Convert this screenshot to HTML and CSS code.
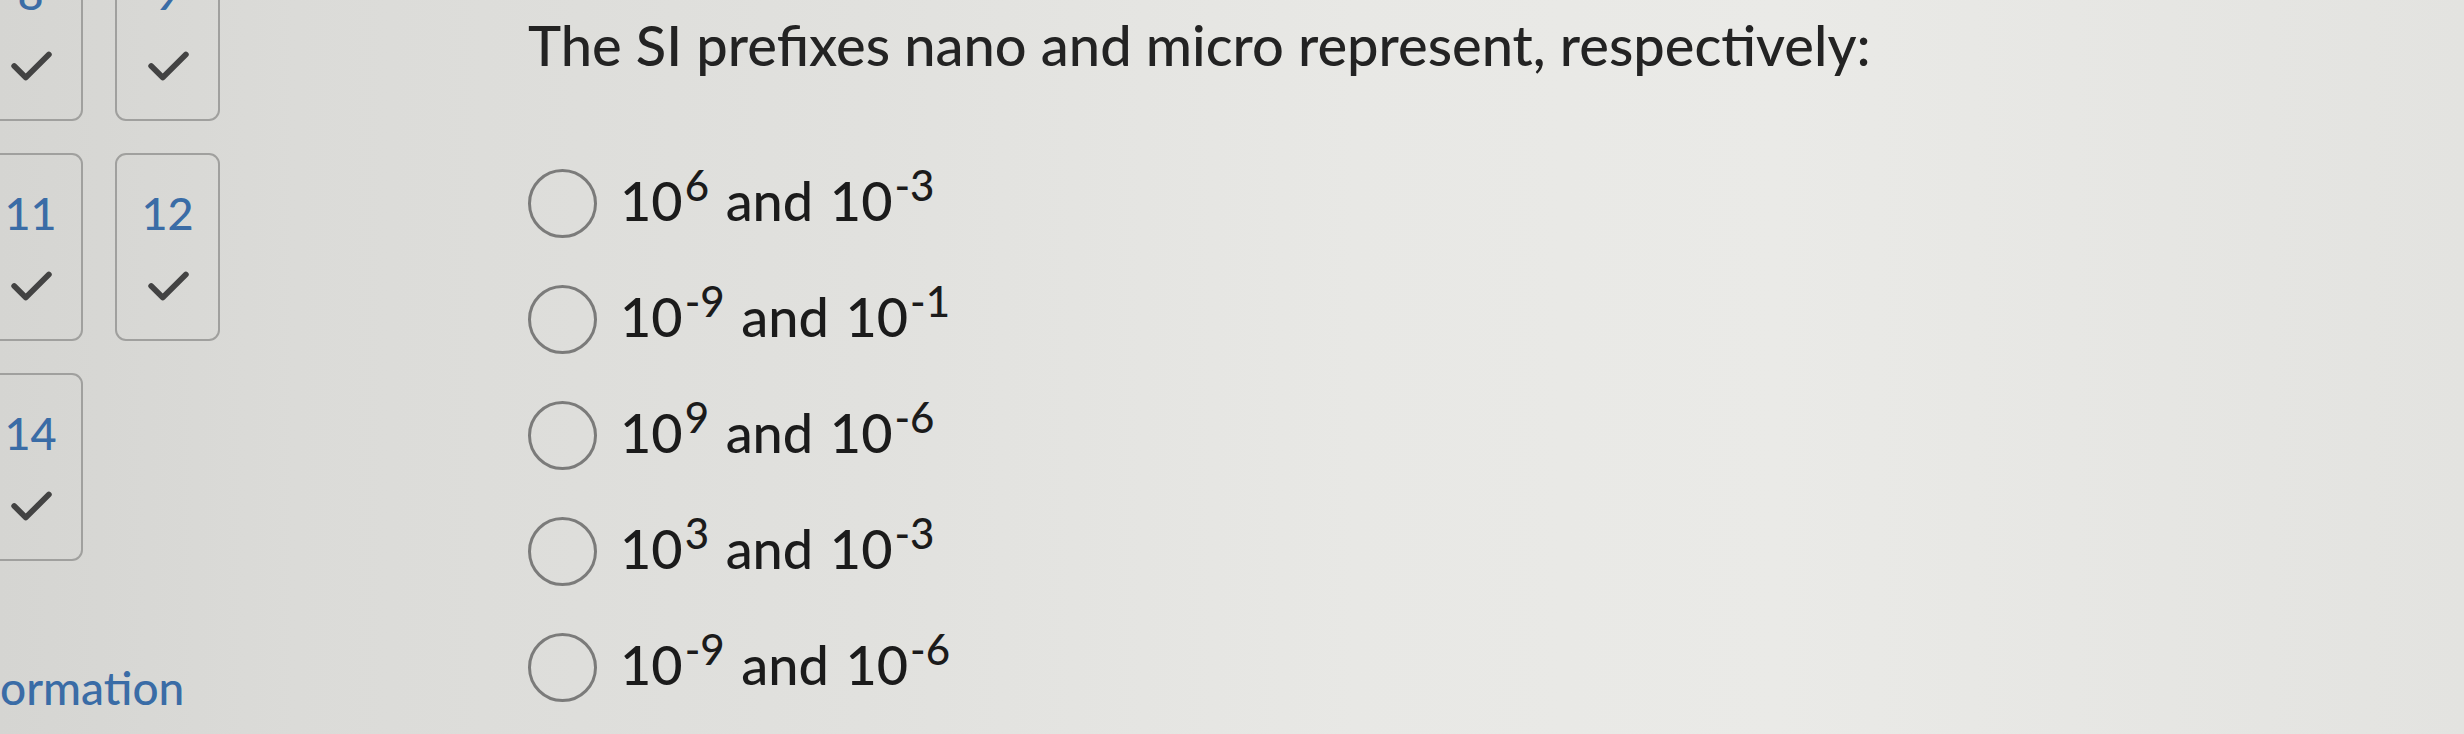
FILE: index.html
```html
<!DOCTYPE html>
<html lang="en">
<head>
<meta charset="utf-8">
<title>Quiz question</title>
<link rel="stylesheet" href="styles.css">
</head>
<body>
<div class="page">
  <aside class="sidebar">
    <div class="grid">
      <div class="card"><span class="num">8</span><svg class="check" viewBox="0 0 40 32"><polyline points="4,16 15,27 37,5"/></svg></div>
      <div class="card"><span class="num">9</span><svg class="check" viewBox="0 0 40 32"><polyline points="4,16 15,27 37,5"/></svg></div>
      <div class="card"><span class="num">11</span><svg class="check" viewBox="0 0 40 32"><polyline points="4,16 15,27 37,5"/></svg></div>
      <div class="card"><span class="num">12</span><svg class="check" viewBox="0 0 40 32"><polyline points="4,16 15,27 37,5"/></svg></div>
      <div class="card"><span class="num">14</span><svg class="check" viewBox="0 0 40 32"><polyline points="4,16 15,27 37,5"/></svg></div>
    </div>
    <div class="info">ormation</div>
  </aside>
  <main class="question">
    <h1 class="prompt">The SI prefixes nano and micro represent, respectively:</h1>
    <ul class="options">
      <li class="option"><span class="radio"></span><span class="label">10<sup>6</sup> and 10<sup>-3</sup></span></li>
      <li class="option"><span class="radio"></span><span class="label">10<sup>-9</sup> and 10<sup>-1</sup></span></li>
      <li class="option"><span class="radio"></span><span class="label">10<sup>9</sup> and 10<sup>-6</sup></span></li>
      <li class="option"><span class="radio"></span><span class="label">10<sup>3</sup> and 10<sup>-3</sup></span></li>
      <li class="option"><span class="radio"></span><span class="label">10<sup>-9</sup> and 10<sup>-6</sup></span></li>
    </ul>
  </main>
</div>
</body>
</html>
```

FILE: styles.css
```css
html, body {
  margin: 0;
  padding: 0;
}
body {
  width: 2464px;
  height: 734px;
  overflow: hidden;
  font-family: Lato, "Open Sans", "Liberation Sans", sans-serif;
  background: linear-gradient(90deg, #d5d5d2 0%, #dbdbd8 12%, #e1e1de 35%, #e8e8e5 55%, #eaeae7 72%, #e3e3e0 100%);
}
.page {
  display: flex;
  align-items: flex-start;
  height: 734px;
}
.sidebar {
  flex: 0 0 242px;
  margin-left: -22px;
  margin-top: -67px;
  display: flex;
  flex-direction: column;
}
.grid {
  display: grid;
  grid-template-columns: 105px 105px;
  grid-auto-rows: 188px;
  column-gap: 32px;
  row-gap: 32px;
}
.card {
  box-sizing: border-box;
  border: 2px solid #a0a09e;
  border-radius: 11px;
  display: flex;
  flex-direction: column;
  align-items: center;
  padding-top: 36px;
}
.num {
  font-size: 45px;
  font-weight: 500;
  line-height: 45px;
  color: #3a6ca6;
}
.check {
  width: 42px;
  height: 34px;
  margin-top: 33px;
}
.check polyline {
  fill: none;
  stroke: #434343;
  stroke-width: 5.5;
  stroke-linecap: round;
  stroke-linejoin: round;
}
.info {
  margin-top: 104px;
  padding-left: 22px;
  font-size: 46px;
  font-weight: 500;
  line-height: 46px;
  color: #3a6ca6;
}
.question {
  margin-left: 308px;
  padding-top: 12px;
  color: #1b1b1b;
}
.prompt {
  margin: 0;
  font-weight: 500;
  font-size: 56px;
  line-height: 66px;
  color: #232323;
  white-space: nowrap;
}
.options {
  list-style: none;
  margin: 91px 0 0 0;
  padding: 0;
  display: flex;
  flex-direction: column;
  gap: 47px;
}
.option {
  display: flex;
  align-items: center;
  height: 69px;
  gap: 23px;
}
.radio {
  box-sizing: border-box;
  width: 69px;
  height: 69px;
  border: 3px solid #7b7b7a;
  border-radius: 50%;
  flex: 0 0 69px;
}
.label {
  font-size: 54px;
  font-weight: 500;
  line-height: 54px;
  margin-top: -6px;
  white-space: nowrap;
  word-spacing: 3px;
}
.label sup {
  font-size: 42px;
  line-height: 0;
  vertical-align: 20px;
  margin-left: 2px;
}
```
